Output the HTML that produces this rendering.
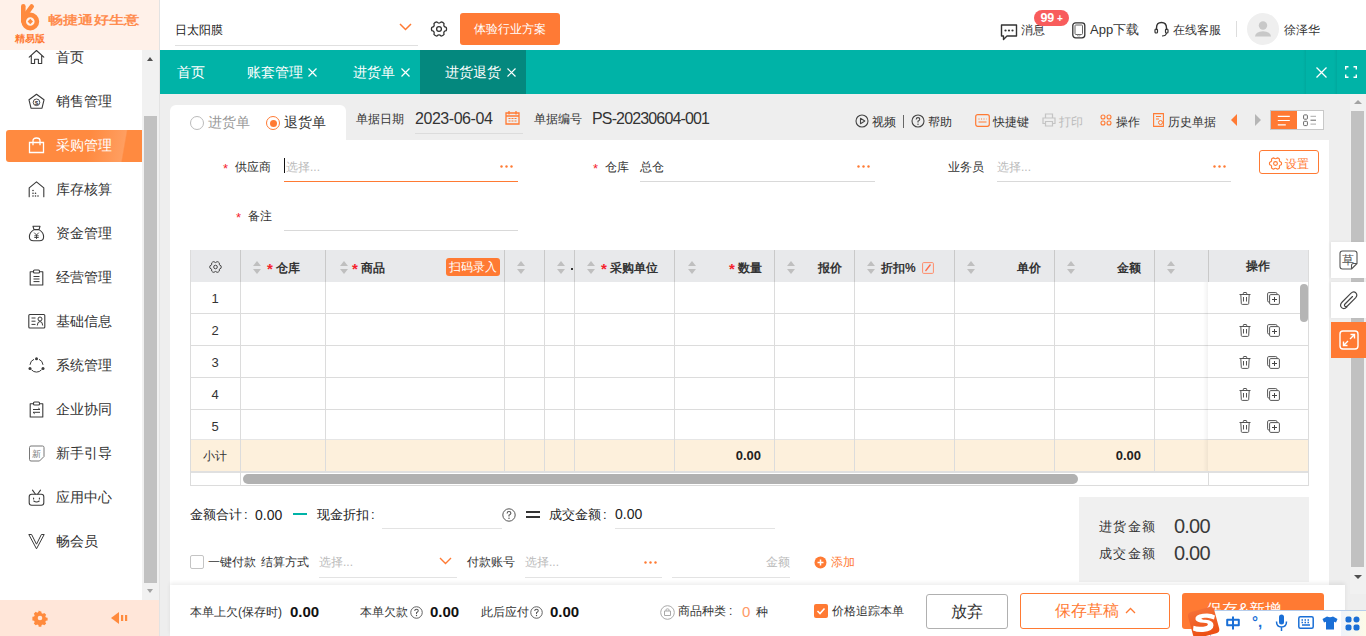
<!DOCTYPE html>
<html><head><meta charset="utf-8">
<style>
*{margin:0;padding:0;box-sizing:border-box}
html,body{width:1366px;height:636px;overflow:hidden;background:#eeeeee;font-family:"Liberation Sans",sans-serif;color:#333;font-size:13px}
.a{position:absolute;white-space:nowrap}
svg{position:absolute;overflow:visible}
/* sidebar */
#side{position:absolute;left:0;top:0;width:160px;height:636px;background:#fff;border-right:1px solid #e3e3e3}
#logo{position:absolute;left:0;top:0;width:159px;height:50px;background:#fff1e9}
.mi{position:absolute;left:56px;font-size:14px;color:#333;line-height:16px}
#sfoot{position:absolute;left:0;top:600px;width:159px;height:36px;background:#ffe6d9}
/* header */
#hdr{position:absolute;left:160px;top:0;width:1206px;height:50px;background:#fff}
#tabs{position:absolute;left:160px;top:50px;width:1206px;height:44px;background:#00b3a7}
.tab{position:absolute;top:0;height:44px;line-height:44px;color:#fff;font-size:14px}
#panel{position:absolute;left:170px;top:140px;width:1159px;height:460px;background:#fff}
.lbl{font-size:12px;color:#333;line-height:16px}
.red{color:#f5222d}
.uline{position:absolute;height:1px;background:#d9d9d9}
.th{position:absolute;top:250px;height:32px;background:#e8e9eb}
.vl{position:absolute;width:1px;background:#dcdcdc}
.hl{position:absolute;height:1px;background:#dcdcdc}
.sort{position:absolute;width:8px;height:13px}
.sort:before{content:"";position:absolute;left:0;top:0;border-left:4px solid transparent;border-right:4px solid transparent;border-bottom:5px solid #bfbfbf}
.sort:after{content:"";position:absolute;left:0;top:8px;border-left:4px solid transparent;border-right:4px solid transparent;border-top:5px solid #bfbfbf}
.thl{position:absolute;top:260px;font-size:12px;font-weight:bold;color:#333;line-height:16px}
</style></head><body>

<!-- SIDEBAR -->
<div id="side">
  <div id="logo">
    <svg style="left:0;top:0" width="159" height="50">
      <circle cx="30.3" cy="21.5" r="6.6" fill="none" stroke="#ff8a3d" stroke-width="4.6"/>
      <path d="M23.3 6.3 V21.5" stroke="#ff8a3d" stroke-width="4.6" stroke-linecap="round"/>
      <path d="M31.7 6.5 L26.5 13.5" stroke="#ff8a3d" stroke-width="4.6" stroke-linecap="round"/>
      <path d="M30.3 18.8 L33 21.5 L30.3 24.2 L27.6 21.5Z" fill="#ff8a3d"/>
    </svg>
    <div class="a" style="left:48px;top:12px;font-size:12px;font-weight:bold;color:#ff8d4f;line-height:16px;transform:scaleX(1.27);transform-origin:0 0">畅捷通好生意</div>
    <div class="a" style="left:15px;top:32px;font-size:10px;font-weight:bold;color:#ff7a33;line-height:14px;letter-spacing:0.2px">精易版</div>
  </div>
  <!-- scroll track -->
  <div class="a" style="left:142px;top:50px;width:17px;height:550px;background:#f1f1f1"></div>
  <div class="a" style="left:144px;top:116px;width:13px;height:467px;background:#c1c1c1"></div>
  <div class="a" style="left:147px;top:57px;width:0;height:0;border-left:3.5px solid transparent;border-right:3.5px solid transparent;border-bottom:4px solid #505050"></div>
  <div class="a" style="left:147px;top:589px;width:0;height:0;border-left:3.5px solid transparent;border-right:3.5px solid transparent;border-top:4px solid #a3a3a3"></div>
  <!-- active -->
  <div class="a" style="left:6px;top:130px;width:136px;height:32px;background:linear-gradient(100deg,#ff8a40 0%,#ff8a40 60%,#ff9e60 85%,#ff8a40 86%);border-radius:3px 0 0 3px"></div>
  <div class="mi" style="top:49px;color:#333">首页</div>
  <svg style="left:28px;top:49px" width="17" height="17" viewBox="0 0 17 17"><path d="M1.2 8.2 L8.5 1.5 L15.8 8.2 M3.3 6.5 V14.5 H6.6 V10.3 H10.4 V14.5 H13.7 V6.5" fill="none" stroke="#3a3a3a" stroke-width="1.1" stroke-linejoin="round" stroke-linecap="round" stroke-width="1.3"/></svg>
  <div class="mi" style="top:93px;color:#333">销售管理</div>
  <svg style="left:28px;top:93px" width="17" height="17" viewBox="0 0 17 17"><path d="M8.5 1.2 L16 6.8 L14 15.2 H3 L1 6.8Z" fill="none" stroke="#3a3a3a" stroke-width="1.1" stroke-linejoin="round" stroke-linecap="round" stroke-width="1.2"/><circle cx="8.5" cy="9.3" r="3.3" fill="none" stroke="#3a3a3a" stroke-width="0.9"/><text x="8.5" y="11.6" font-size="6.2" text-anchor="middle" fill="#3a3a3a" font-family="Liberation Sans" font-weight="bold">$</text></svg>
  <div class="mi" style="top:137px;color:#fff">采购管理</div>
  <svg style="left:28px;top:137px" width="17" height="17" viewBox="0 0 17 17"><path d="M1.5 5.5 H15.5 V15.5 H1.5Z M5 8.3 V3.8 Q5 1 8.5 1 Q12 1 12 3.8 V8.3" fill="none" stroke="#fff" stroke-width="1.3"/></svg>
  <div class="mi" style="top:181px;color:#333">库存核算</div>
  <svg style="left:28px;top:181px" width="17" height="17" viewBox="0 0 17 17"><path d="M1.2 15.8 V6.8 L8.5 0.8 L15.8 6.8 V15.8" fill="none" stroke="#3a3a3a" stroke-width="1.1" stroke-linejoin="round" stroke-linecap="round"/><path d="M5 9.5h.01M5 12.3h.01M7.5 12.3h.01M5 15h.01M7.5 15h.01M10 15h.01" stroke="#3a3a3a" stroke-width="1.6" stroke-linecap="round"/></svg>
  <div class="mi" style="top:225px;color:#333">资金管理</div>
  <svg style="left:28px;top:225px" width="17" height="17" viewBox="0 0 17 17"><path d="M6 4.6 L5 1.3 H12 L11 4.6 M6 4.6 H11 Q15.8 7.5 15.6 12 Q15.5 15.8 11.5 15.8 H5.5 Q1.5 15.8 1.4 12 Q1.2 7.5 6 4.6Z" fill="none" stroke="#3a3a3a" stroke-width="1.1" stroke-linejoin="round" stroke-linecap="round"/><path d="M6.2 7.6 L8.5 10 L10.8 7.6 M8.5 10 V14 M6.3 10.8 H10.7 M6.3 12.5 H10.7" fill="none" stroke="#3a3a3a" stroke-width="0.9"/></svg>
  <div class="mi" style="top:269px;color:#333">经营管理</div>
  <svg style="left:28px;top:269px" width="17" height="17" viewBox="0 0 17 17"><path d="M5.5 2.8 H2.2 V16 H14.8 V2.8 H11.5" fill="none" stroke="#3a3a3a" stroke-width="1.1" stroke-linejoin="round" stroke-linecap="round"/><rect x="5.5" y="1" width="6" height="3" rx="1" fill="none" stroke="#3a3a3a" stroke-width="1.1" stroke-linejoin="round" stroke-linecap="round"/><path d="M5.5 7.5 H11.5 M5.5 10 H11.5 M5.5 12.6 H11.5" stroke="#3a3a3a" stroke-width="1"/></svg>
  <div class="mi" style="top:313px;color:#333">基础信息</div>
  <svg style="left:28px;top:313px" width="17" height="17" viewBox="0 0 17 17"><rect x="0.8" y="1.5" width="16" height="13.5" rx="1" fill="none" stroke="#3a3a3a" stroke-width="1.1" stroke-linejoin="round" stroke-linecap="round"/><path d="M3.5 5 H7.5 M3.5 8.2 H7.5 M3.5 11.4 H7.5" stroke="#3a3a3a" stroke-width="1"/><circle cx="12" cy="6" r="2" fill="none" stroke="#3a3a3a" stroke-width="1"/><path d="M9.3 12.5 Q9.5 8.5 12 8.5 Q14.5 8.5 14.7 12.5" fill="none" stroke="#3a3a3a" stroke-width="1"/></svg>
  <div class="mi" style="top:357px;color:#333">系统管理</div>
  <svg style="left:28px;top:357px" width="17" height="17" viewBox="0 0 17 17"><path d="M6 2.3 A6.6 6.6 0 0 0 2 7.8 M11 2.3 A6.6 6.6 0 0 1 15 7.8 M13.5 12.8 A6.6 6.6 0 0 1 3.5 12.8" fill="none" stroke="#3a3a3a" stroke-width="1"/><circle cx="8.5" cy="1.8" r="1.5" fill="#3a3a3a"/><circle cx="2" cy="11.5" r="1.5" fill="#3a3a3a"/><circle cx="15" cy="11.5" r="1.5" fill="#3a3a3a"/></svg>
  <div class="mi" style="top:401px;color:#333">企业协同</div>
  <svg style="left:28px;top:401px" width="17" height="17" viewBox="0 0 17 17"><path d="M5.5 2.8 H2.2 V16 H14.8 V2.8 H11.5" fill="none" stroke="#3a3a3a" stroke-width="1.1" stroke-linejoin="round" stroke-linecap="round"/><rect x="5.5" y="1" width="6" height="3" rx="1" fill="none" stroke="#3a3a3a" stroke-width="1.1" stroke-linejoin="round" stroke-linecap="round"/><path d="M5 8.5 H12 L10.3 7 M12 11.3 H5 L6.7 12.8" fill="none" stroke="#3a3a3a" stroke-width="1"/></svg>
  <div class="mi" style="top:445px;color:#333">新手引导</div>
  <svg style="left:28px;top:445px" width="17" height="17" viewBox="0 0 17 17"><path d="M3 1 H14.5 Q16 1 16 2.5 V11.5 L11.5 16 H3 Q1.5 16 1.5 14.5 V2.5 Q1.5 1 3 1Z" fill="none" stroke="#777" stroke-width="1"/><text x="8.7" y="12.2" font-size="9" text-anchor="middle" fill="#777">新</text></svg>
  <div class="mi" style="top:489px;color:#333">应用中心</div>
  <svg style="left:28px;top:489px" width="17" height="17" viewBox="0 0 17 17"><rect x="1.2" y="5.3" width="14.6" height="11" rx="2.5" fill="none" stroke="#3a3a3a" stroke-width="1.1" stroke-linejoin="round" stroke-linecap="round"/><path d="M4.5 1.2 L7.3 5 M12.5 1.2 L9.7 5" fill="none" stroke="#3a3a3a" stroke-width="1.1" stroke-linejoin="round" stroke-linecap="round"/><path d="M5.6 9 V10 M11.4 9 V10 M5.8 12 Q8.5 14 11.2 12" fill="none" stroke="#3a3a3a" stroke-width="1.1" stroke-linejoin="round" stroke-linecap="round"/></svg>
  <div class="mi" style="top:533px;color:#333">畅会员</div>
  <svg style="left:28px;top:533px" width="17" height="17" viewBox="0 0 17 17"><path d="M0.8 1.5 L8.5 15.8 L16.2 1.5 H13.4 L8.5 11.2 L3.6 1.5Z" fill="none" stroke="#3a3a3a" stroke-width="1" stroke-linejoin="round"/></svg>
  
  <div id="sfoot">
    <svg style="left:32px;top:10px" width="16" height="16" viewBox="0 0 16 16"><path d="M8 1.2l1.3.3.3 1.7 1.2.6 1.5-.9 1.9 1.9-.9 1.5.6 1.2 1.7.3v2.6l-1.7.3-.6 1.2.9 1.5-1.9 1.9-1.5-.9-1.2.6-.3 1.7H6.7l-.3-1.7-1.2-.6-1.5.9-1.9-1.9.9-1.5-.6-1.2-1.7-.3V6.7l1.7-.3.6-1.2-.9-1.5 1.9-1.9 1.5.9 1.2-.6.3-1.7z" fill="#ff8a3d"/><circle cx="8" cy="8" r="2.3" fill="#ffe6d9"/></svg>
    <svg style="left:110px;top:11px" width="20" height="14" viewBox="0 0 20 14"><path d="M1 7 L9 1 V13Z" fill="#ff8a3d"/><rect x="11" y="4" width="2.2" height="6" fill="#ff8a3d"/><rect x="15" y="4" width="2.2" height="6" fill="#ff8a3d"/></svg>
  </div>
</div>

<!-- HEADER -->
<div id="hdr">
  <div class="a" style="left:15px;top:22px;font-size:12px;color:#222;line-height:16px">日太阳膜</div>
  <div class="a" style="left:15px;top:45px;width:243px;height:1px;background:#e0e0e0"></div>
  <svg style="left:239px;top:23px" width="13" height="8" viewBox="0 0 13 8"><path d="M1 1 L6.5 6.5 L12 1" fill="none" stroke="#ff7a33" stroke-width="1.5"/></svg>
  <svg style="left:270px;top:20px" width="18" height="18" viewBox="0 0 18 18"><path d="M16.21 7.34 A4.07 4.07 0 0 1 16.21 10.66 Q12.98 11.30 14.05 14.41 A4.07 4.07 0 0 1 11.16 16.08 Q9.00 13.60 6.84 16.08 A4.07 4.07 0 0 1 3.95 14.41 Q5.02 11.30 1.79 10.66 A4.07 4.07 0 0 1 1.79 7.34 Q5.02 6.70 3.95 3.59 A4.07 4.07 0 0 1 6.84 1.92 Q9.00 4.40 11.16 1.92 A4.07 4.07 0 0 1 14.05 3.59 Q12.98 6.70 16.21 7.34Z" fill="none" stroke="#333" stroke-width="1.3" stroke-linejoin="round"/><circle cx="9" cy="9" r="2.4" fill="none" stroke="#333" stroke-width="1.3"/></svg>
  <div class="a" style="left:300px;top:13px;width:100px;height:32px;background:#ff7a35;border-radius:3px;color:#fff;font-size:12px;line-height:32px;text-align:center">体验行业方案</div>
  <!-- right -->
  <svg style="left:840px;top:23px" width="18" height="18" viewBox="0 0 18 18"><path d="M1.5 2 H16.5 V13 H7 L3.5 16.5 V13 H1.5Z" fill="none" stroke="#333" stroke-width="1.4" stroke-linejoin="round"/><circle cx="5.5" cy="7.5" r="1.1" fill="#333"/><circle cx="9" cy="7.5" r="1.1" fill="#333"/><circle cx="12.5" cy="7.5" r="1.1" fill="#333"/></svg>
  <div class="a" style="left:861px;top:22px;font-size:12px;color:#333;line-height:16px">消息</div>
  <div class="a" style="left:874px;top:10px;width:35px;height:16px;background:#f85c5c;border-radius:8px;color:#fff;font-size:12.5px;font-weight:bold;line-height:16px;text-align:center;letter-spacing:-0.3px">99<span style="font-size:10px;margin-left:3px">+</span></div>
  <svg style="left:912px;top:22px" width="14" height="17" viewBox="0 0 14 17"><rect x="0.8" y="0.8" width="12" height="15" rx="2.8" fill="none" stroke="#333" stroke-width="1.3"/><path d="M3.8 3 H9.8 Q10.5 3 10.5 3.7 V11.5 Q10.5 12.5 9.5 12.5 H4 Q3 12.5 3 11.5 V3.7 Q3 3 3.8 3Z" fill="none" stroke="#666" stroke-width="1"/><path d="M5.5 12.5 V14 H8 V12.5" fill="none" stroke="#999" stroke-width="0.8"/></svg>
  <div class="a" style="left:930px;top:22px;font-size:13px;color:#333;line-height:16px">App下载</div>
  <svg style="left:994px;top:21px" width="15" height="17" viewBox="0 0 15 17"><path d="M2.5 9 V7 Q2.5 1.5 7.5 1.5 Q12.5 1.5 12.5 7 V9" fill="none" stroke="#333" stroke-width="1.4"/><rect x="1" y="8" width="2.5" height="4" rx="1" fill="none" stroke="#333" stroke-width="1.2"/><rect x="11.5" y="8" width="2.5" height="4" rx="1" fill="none" stroke="#333" stroke-width="1.2"/><path d="M12.5 12 Q12 15 8 15" fill="none" stroke="#333" stroke-width="1.2"/></svg>
  <div class="a" style="left:1013px;top:22px;font-size:12px;color:#333;line-height:16px">在线客服</div>
  <div class="a" style="left:1076px;top:21px;width:1px;height:16px;background:#ddd"></div>
  <div class="a" style="left:1087px;top:13px;width:32px;height:32px;border-radius:50%;background:#efefef;overflow:hidden">
    <svg style="left:0;top:0" width="32" height="32" viewBox="0 0 32 32"><circle cx="16" cy="12.5" r="4.2" fill="#c8c8c8"/><path d="M8 23.5 Q8.5 18.5 16 18.3 Q23.5 18.5 24 23.5Z" fill="#c8c8c8"/></svg>
  </div>
  <div class="a" style="left:1124px;top:22px;font-size:12px;color:#333;line-height:16px">徐泽华</div>
</div>
<div id="tabs">
  <div class="tab" style="left:17px">首页</div>
  <div class="tab" style="left:87px">账套管理</div>
  <svg style="left:148px;top:18px" width="9" height="9" viewBox="0 0 9 9"><path d="M0.5 0.5 L8.5 8.5 M8.5 0.5 L0.5 8.5" stroke="#fff" stroke-width="1.2"/></svg>
  <div class="tab" style="left:193px">进货单</div>
  <svg style="left:241px;top:18px" width="9" height="9" viewBox="0 0 9 9"><path d="M0.5 0.5 L8.5 8.5 M8.5 0.5 L0.5 8.5" stroke="#fff" stroke-width="1.2"/></svg>
  <div class="a" style="left:260px;top:0;width:106px;height:44px;background:#04887e"></div>
  <div class="tab" style="left:285px">进货退货</div>
  <svg style="left:347px;top:18px" width="9" height="9" viewBox="0 0 9 9"><path d="M0.5 0.5 L8.5 8.5 M8.5 0.5 L0.5 8.5" stroke="#fff" stroke-width="1.2"/></svg>
  <div class="a" style="left:1143px;top:0;width:3px;height:44px;background:linear-gradient(90deg,rgba(0,0,0,0),rgba(0,0,0,0.06))"></div>
  <div class="a" style="left:1174px;top:0;width:3px;height:44px;background:linear-gradient(90deg,rgba(0,0,0,0),rgba(0,0,0,0.06))"></div>
  <svg style="left:1156px;top:17px" width="11" height="11" viewBox="0 0 11 11"><path d="M0.5 0.5 L10.5 10.5 M10.5 0.5 L0.5 10.5" stroke="#fff" stroke-width="1.3"/></svg>
  <svg style="left:1185px;top:16px" width="12" height="12" viewBox="0 0 12 12"><path d="M0.7 3.5 V0.7 H3.5 M8.5 0.7 H11.3 V3.5 M11.3 8.5 V11.3 H8.5 M3.5 11.3 H0.7 V8.5" fill="none" stroke="#fff" stroke-width="1.4"/></svg>
</div>

<!-- PANEL -->
<div id="panel"></div>
<!-- top toolbar -->
<div class="a" style="left:170px;top:105px;width:176px;height:40px;background:#fff;border-radius:6px 6px 0 0"></div>
<div class="a" style="left:190px;top:116px;width:14px;height:14px;border:1px solid #bbb;border-radius:50%;background:#fff"></div>
<div class="a" style="left:208px;top:113px;font-size:14px;color:#999;line-height:18px">进货单</div>
<div class="a" style="left:266px;top:116px;width:14px;height:14px;border:1px solid #ff7a33;border-radius:50%;background:#fff"></div>
<div class="a" style="left:269.5px;top:119.5px;width:7px;height:7px;border-radius:50%;background:#ff7a33"></div>
<div class="a" style="left:284px;top:113px;font-size:14px;color:#333;line-height:18px">退货单</div>
<div class="a" style="left:356px;top:111px;font-size:12px;color:#333;line-height:16px">单据日期</div>
<div class="a" style="left:415px;top:110px;font-size:16px;color:#333;line-height:18px;letter-spacing:-0.45px">2023-06-04</div>
<div class="a" style="left:415px;top:133px;width:108px;height:1px;background:#dcdcdc"></div>
<svg style="left:505px;top:110px" width="15" height="15" viewBox="0 0 15 15"><path d="M1 3 H14 V14 H1Z M1 6 H14 M4 1 V4.5 M11 1 V4.5" fill="none" stroke="#ff7a33" stroke-width="1.3"/><path d="M3.5 8.5h2M6.5 8.5h2M9.5 8.5h2M3.5 11h2M6.5 11h2M9.5 11h2" stroke="#ff7a33" stroke-width="1.2"/></svg>
<div class="a" style="left:534px;top:111px;font-size:12px;color:#333;line-height:16px">单据编号</div>
<div class="a" style="left:592px;top:110px;font-size:16px;color:#333;line-height:18px;letter-spacing:-0.85px">PS-20230604-001</div>
<!-- right toolbar -->
<svg style="left:855px;top:114px" width="14" height="14" viewBox="0 0 14 14"><circle cx="7" cy="7" r="6" fill="none" stroke="#444" stroke-width="1.1"/><path d="M5.5 4.3 L9.8 7 L5.5 9.7Z" fill="none" stroke="#444" stroke-width="1.1" stroke-linejoin="round"/></svg>
<div class="a" style="left:872px;top:114px;font-size:12px;color:#333;line-height:16px">视频</div>
<div class="a" style="left:903px;top:115px;width:1px;height:13px;background:#666"></div>
<svg style="left:911px;top:114px" width="14" height="14" viewBox="0 0 14 14"><circle cx="7" cy="7" r="6" fill="none" stroke="#444" stroke-width="1.1"/><path d="M5.2 5.4 Q5.2 3.6 7 3.6 Q8.8 3.6 8.8 5.2 Q8.8 6.3 7 7.2 V8.6" fill="none" stroke="#444" stroke-width="1.1"/><circle cx="7" cy="10.3" r="0.7" fill="#444"/></svg>
<div class="a" style="left:928px;top:114px;font-size:12px;color:#333;line-height:16px">帮助</div>
<svg style="left:975px;top:114px" width="15" height="13" viewBox="0 0 15 13"><rect x="0.7" y="0.7" width="13.6" height="11.6" rx="2" fill="none" stroke="#ff7a33" stroke-width="1.2"/><path d="M3.5 5h1M6 5h1M8.5 5h1M11 5h.5M3.5 8h8" stroke="#ff7a33" stroke-width="1.1"/></svg>
<div class="a" style="left:993px;top:114px;font-size:12px;color:#333;line-height:16px">快捷键</div>
<svg style="left:1042px;top:113px" width="14" height="14" viewBox="0 0 14 14"><path d="M3.5 5 V1 H10.5 V5 M3.5 10.5 H1 V5 H13 V10.5 H10.5 M3.5 8.5 H10.5 V13 H3.5Z" fill="none" stroke="#c4c4c4" stroke-width="1.2"/></svg>
<div class="a" style="left:1059px;top:114px;font-size:12px;color:#bbb;line-height:16px">打印</div>
<svg style="left:1100px;top:114px" width="12" height="12" viewBox="0 0 12 12"><circle cx="3" cy="3" r="2" fill="none" stroke="#ff7a33" stroke-width="1.1"/><circle cx="9" cy="3" r="2" fill="none" stroke="#ff7a33" stroke-width="1.1"/><circle cx="3" cy="9" r="2" fill="none" stroke="#ff7a33" stroke-width="1.1"/><circle cx="9" cy="9" r="2" fill="none" stroke="#ff7a33" stroke-width="1.1"/></svg>
<div class="a" style="left:1116px;top:114px;font-size:12px;color:#333;line-height:16px">操作</div>
<svg style="left:1153px;top:113px" width="11" height="14" viewBox="0 0 11 14"><path d="M0.6 0.6 H10.4 V13.4 H0.6Z M3 3.5 H8 M3 6 H6" fill="none" stroke="#ff7a33" stroke-width="1.1"/><circle cx="7.5" cy="9.5" r="2" fill="none" stroke="#ff7a33" stroke-width="1"/></svg>
<div class="a" style="left:1168px;top:114px;font-size:12px;color:#333;line-height:16px">历史单据</div>
<div class="a" style="left:1231px;top:114px;width:0;height:0;border-top:6px solid transparent;border-bottom:6px solid transparent;border-right:6px solid #ff7a33"></div>
<div class="a" style="left:1255px;top:114px;width:0;height:0;border-top:6px solid transparent;border-bottom:6px solid transparent;border-left:6px solid #b5b5b5"></div>
<div class="a" style="left:1270px;top:110px;width:54px;height:20px;border:1px solid #c8c8c8;background:#fff"></div>
<div class="a" style="left:1271px;top:111px;width:26px;height:18px;background:#ff7a33"></div>
<svg style="left:1277px;top:114px" width="16" height="12" viewBox="0 0 16 12"><path d="M0.8 2.3 H12.8 M0.8 6.5 H12.8 M0.8 10.8 H8.8" stroke="#fff" stroke-width="1.2"/></svg>
<svg style="left:1302px;top:114px" width="16" height="12" viewBox="0 0 16 12"><rect x="1.6" y="0.9" width="3.8" height="4.3" rx="0.8" fill="none" stroke="#666" stroke-width="1"/><rect x="1.6" y="7.3" width="3.8" height="4.3" rx="0.8" fill="none" stroke="#666" stroke-width="1"/><path d="M8.5 2.3 H14 M8.5 10.1 H14" stroke="#bbb" stroke-width="1.2"/><path d="M8.5 6.2 H14" stroke="#666" stroke-width="1"/></svg>
<!-- page scrollbar -->
<div class="a" style="left:1350px;top:94px;width:16px;height:500px;background:#f1f1f1"></div>
<div class="a" style="left:1351px;top:111px;width:13px;height:456px;background:#c1c1c1"></div>
<div class="a" style="left:1354px;top:100px;width:0;height:0;border-left:4px solid transparent;border-right:4px solid transparent;border-bottom:4px solid #a3a3a3"></div>
<div class="a" style="left:1354px;top:575px;width:0;height:0;border-left:4px solid transparent;border-right:4px solid transparent;border-top:4px solid #505050"></div>

<!-- form -->
<div class="a red" style="left:223px;top:161px;font-size:13px;line-height:16px">*</div>
<div class="a lbl" style="left:235px;top:159px">供应商</div>
<div class="a" style="left:284px;top:158px;width:1px;height:15px;background:#111"></div>
<div class="a" style="left:286px;top:159px;font-size:12px;color:#bbb;line-height:16px">选择...</div>
<div class="a" style="left:284px;top:181px;width:234px;height:1px;background:#ff7a33"></div>
<svg style="left:500px;top:165px" width="13" height="3" viewBox="0 0 13 3"><circle cx="1.5" cy="1.5" r="1.2" fill="#ff7a33"/><circle cx="6.5" cy="1.5" r="1.2" fill="#ff7a33"/><circle cx="11.5" cy="1.5" r="1.2" fill="#ff7a33"/></svg>
<div class="a red" style="left:593px;top:161px;font-size:13px;line-height:16px">*</div>
<div class="a lbl" style="left:605px;top:159px">仓库</div>
<div class="a lbl" style="left:640px;top:159px">总仓</div>
<div class="uline" style="left:640px;top:181px;width:235px"></div>
<svg style="left:857px;top:165px" width="13" height="3" viewBox="0 0 13 3"><circle cx="1.5" cy="1.5" r="1.2" fill="#ff7a33"/><circle cx="6.5" cy="1.5" r="1.2" fill="#ff7a33"/><circle cx="11.5" cy="1.5" r="1.2" fill="#ff7a33"/></svg>
<div class="a lbl" style="left:948px;top:159px">业务员</div>
<div class="a" style="left:997px;top:159px;font-size:12px;color:#bbb;line-height:16px">选择...</div>
<div class="uline" style="left:997px;top:181px;width:234px"></div>
<svg style="left:1213px;top:165px" width="13" height="3" viewBox="0 0 13 3"><circle cx="1.5" cy="1.5" r="1.2" fill="#ff7a33"/><circle cx="6.5" cy="1.5" r="1.2" fill="#ff7a33"/><circle cx="11.5" cy="1.5" r="1.2" fill="#ff7a33"/></svg>
<div class="a" style="left:1259px;top:150px;width:60px;height:24px;border:1px solid #ff7a33;border-radius:3px"></div>
<svg style="left:1269px;top:157px" width="13" height="13" viewBox="0 0 13 13"><path d="M12.25 5.17 A3.25 3.25 0 0 1 12.25 7.83 Q9.79 8.40 10.52 10.81 A3.25 3.25 0 0 1 8.22 12.14 Q6.50 10.30 4.78 12.14 A3.25 3.25 0 0 1 2.48 10.81 Q3.21 8.40 0.75 7.83 A3.25 3.25 0 0 1 0.75 5.17 Q3.21 4.60 2.48 2.19 A3.25 3.25 0 0 1 4.78 0.86 Q6.50 2.70 8.22 0.86 A3.25 3.25 0 0 1 10.52 2.19 Q9.79 4.60 12.25 5.17Z" fill="none" stroke="#ff7a33" stroke-width="1.1" stroke-linejoin="round"/><circle cx="6.5" cy="6.5" r="1.9" fill="none" stroke="#ff7a33" stroke-width="1.1"/></svg>
<div class="a" style="left:1285px;top:156px;font-size:12px;color:#ff7a33;line-height:16px">设置</div>
<div class="a red" style="left:236px;top:210px;font-size:13px;line-height:16px">*</div>
<div class="a lbl" style="left:248px;top:208px">备注</div>
<div class="uline" style="left:284px;top:230px;width:234px"></div>
<div class="a" style="left:190px;top:250px;width:1119px;height:32px;background:#e8e9eb"></div>
<div class="a" style="left:190px;top:439px;width:1119px;height:32px;background:#fdf0dc"></div>
<div class="hl" style="left:190px;top:313px;width:1119px"></div>
<div class="hl" style="left:190px;top:345px;width:1119px"></div>
<div class="hl" style="left:190px;top:377px;width:1119px"></div>
<div class="hl" style="left:190px;top:409px;width:1119px"></div>
<div class="hl" style="left:190px;top:439px;width:1119px;background:#e6e6e6"></div>
<div class="hl" style="left:190px;top:471px;width:1119px;height:2px;background:#e0e0e0"></div>
<div class="hl" style="left:190px;top:485px;width:1119px"></div>
<div class="vl" style="left:190px;top:250px;height:236px;background:#dcdcdc"></div>
<div class="vl" style="left:240px;top:250px;height:32px;background:#c9c9c9"></div>
<div class="vl" style="left:240px;top:282px;height:204px"></div>
<div class="vl" style="left:325px;top:250px;height:32px;background:#c9c9c9"></div>
<div class="vl" style="left:325px;top:282px;height:189px"></div>
<div class="vl" style="left:504px;top:250px;height:32px;background:#c9c9c9"></div>
<div class="vl" style="left:504px;top:282px;height:189px"></div>
<div class="vl" style="left:544px;top:250px;height:32px;background:#c9c9c9"></div>
<div class="vl" style="left:544px;top:282px;height:189px"></div>
<div class="vl" style="left:574px;top:250px;height:32px;background:#c9c9c9"></div>
<div class="vl" style="left:574px;top:282px;height:189px"></div>
<div class="vl" style="left:674px;top:250px;height:32px;background:#c9c9c9"></div>
<div class="vl" style="left:674px;top:282px;height:189px"></div>
<div class="vl" style="left:774px;top:250px;height:32px;background:#c9c9c9"></div>
<div class="vl" style="left:774px;top:282px;height:189px"></div>
<div class="vl" style="left:854px;top:250px;height:32px;background:#c9c9c9"></div>
<div class="vl" style="left:854px;top:282px;height:189px"></div>
<div class="vl" style="left:954px;top:250px;height:32px;background:#c9c9c9"></div>
<div class="vl" style="left:954px;top:282px;height:189px"></div>
<div class="vl" style="left:1054px;top:250px;height:32px;background:#c9c9c9"></div>
<div class="vl" style="left:1054px;top:282px;height:189px"></div>
<div class="vl" style="left:1154px;top:250px;height:32px;background:#c9c9c9"></div>
<div class="vl" style="left:1154px;top:282px;height:189px"></div>
<div class="vl" style="left:1208px;top:250px;height:32px;background:#c9c9c9"></div>
<div class="vl" style="left:1308px;top:250px;height:236px;background:#dcdcdc"></div>
<svg style="left:208px;top:260px" width="14" height="14" viewBox="0 0 14 14"><path d="M12.96 5.74 A3.08 3.08 0 0 1 12.96 8.26 Q10.53 8.75 11.32 11.10 A3.08 3.08 0 0 1 9.14 12.36 Q7.50 10.50 5.86 12.36 A3.08 3.08 0 0 1 3.68 11.10 Q4.47 8.75 2.04 8.26 A3.08 3.08 0 0 1 2.04 5.74 Q4.47 5.25 3.68 2.90 A3.08 3.08 0 0 1 5.86 1.64 Q7.50 3.50 9.14 1.64 A3.08 3.08 0 0 1 11.32 2.90 Q10.53 5.25 12.96 5.74Z" fill="none" stroke="#444" stroke-width="1" stroke-linejoin="round"/><circle cx="7.5" cy="7" r="1.8" fill="none" stroke="#444" stroke-width="1"/></svg>
<div class="sort" style="left:253px;top:261px"></div>
<div class="sort" style="left:340px;top:261px"></div>
<div class="sort" style="left:517px;top:261px"></div>
<div class="sort" style="left:557px;top:261px"></div>
<div class="sort" style="left:587px;top:261px"></div>
<div class="sort" style="left:688px;top:261px"></div>
<div class="sort" style="left:787px;top:261px"></div>
<div class="sort" style="left:867px;top:261px"></div>
<div class="sort" style="left:967px;top:261px"></div>
<div class="sort" style="left:1067px;top:261px"></div>
<div class="sort" style="left:1167px;top:261px"></div>
<div class="a red" style="left:267px;top:261px;font-size:15px;font-weight:bold;line-height:16px">*</div><div class="a thl" style="left:276px">仓库</div>
<div class="a red" style="left:352px;top:261px;font-size:15px;font-weight:bold;line-height:16px">*</div><div class="a thl" style="left:361px">商品</div>
<div class="a" style="left:446px;top:258px;width:54px;height:18px;background:#ff7a33;border-radius:3px;color:#fff;font-size:12px;line-height:18px;text-align:center">扫码录入</div>
<div class="a" style="left:571px;top:268px;width:2px;height:2px;background:#333"></div>
<div class="a red" style="left:601px;top:261px;font-size:15px;font-weight:bold;line-height:16px">*</div><div class="a thl" style="left:610px">采购单位</div>
<div class="a red" style="left:729px;top:261px;font-size:15px;font-weight:bold;line-height:16px">*</div><div class="a thl" style="left:738px">数量</div>
<div class="a thl" style="left:818px">报价</div>
<div class="a thl" style="left:881px">折扣%</div>
<svg style="left:922px;top:262px" width="12" height="12" viewBox="0 0 12 12"><rect x="0.6" y="0.6" width="10.8" height="10.8" rx="1" fill="none" stroke="#ff8c6a" stroke-width="1"/><path d="M3.5 9 L8.5 2.5" stroke="#ff6a4a" stroke-width="1.3"/></svg>
<div class="a thl" style="left:1017px">单价</div>
<div class="a thl" style="left:1117px">金额</div>
<div class="a" style="left:190px;top:291px;width:50px;text-align:center;font-size:13px;line-height:16px;color:#333">1</div>
<div class="a" style="left:190px;top:323px;width:50px;text-align:center;font-size:13px;line-height:16px;color:#333">2</div>
<div class="a" style="left:190px;top:355px;width:50px;text-align:center;font-size:13px;line-height:16px;color:#333">3</div>
<div class="a" style="left:190px;top:387px;width:50px;text-align:center;font-size:13px;line-height:16px;color:#333">4</div>
<div class="a" style="left:190px;top:419px;width:50px;text-align:center;font-size:13px;line-height:16px;color:#333">5</div>
<div class="a" style="left:190px;top:448px;width:50px;text-align:center;font-size:12px;line-height:16px;color:#333">小计</div>
<div class="a" style="left:674px;top:448px;width:87px;text-align:right;font-size:13px;font-weight:bold;line-height:16px;color:#222">0.00</div>
<div class="a" style="left:1054px;top:448px;width:87px;text-align:right;font-size:13px;font-weight:bold;line-height:16px;color:#222">0.00</div>
<div class="a" style="left:243px;top:474px;width:835px;height:10px;border-radius:5px;background:#b1b1b1"></div>
<div class="a" style="left:1203px;top:282px;width:5px;height:189px;background:linear-gradient(90deg,rgba(0,0,0,0),rgba(0,0,0,0.05))"></div>
<div class="a" style="left:1208px;top:282px;width:100px;height:157px;background:#fff"></div>
<div class="a" style="left:1208px;top:439px;width:100px;height:32px;background:#fdf0dc"></div>
<div class="hl" style="left:1208px;top:313px;width:100px"></div>
<div class="hl" style="left:1208px;top:345px;width:100px"></div>
<div class="hl" style="left:1208px;top:377px;width:100px"></div>
<div class="hl" style="left:1208px;top:409px;width:100px"></div>
<div class="hl" style="left:1208px;top:439px;width:100px"></div>
<div class="vl" style="left:1208px;top:471px;height:15px"></div>
<div class="vl" style="left:1208px;top:250px;height:32px;background:#c9c9c9"></div>
<div class="a thl" style="left:1208px;top:258px;width:100px;text-align:center">操作</div>
<svg style="left:1239px;top:292px" width="12" height="13" viewBox="0 0 12 13"><path d="M0.5 2.5 H11.5 M4.3 2.5 V1.2 Q4.3 0.5 5 0.5 H7 Q7.7 0.5 7.7 1.2 V2.5 M1.8 2.5 L2.3 11.5 Q2.4 12.4 3.3 12.4 H8.7 Q9.6 12.4 9.7 11.5 L10.2 2.5 M4.5 5 V9.5 M7.5 5 V9.5" fill="none" stroke="#555" stroke-width="1"/></svg>
<svg style="left:1267px;top:292px" width="13" height="13" viewBox="0 0 13 13"><path d="M2.5 10 H1.8 Q0.6 10 0.6 8.8 V1.8 Q0.6 0.6 1.8 0.6 H8.8 Q10 0.6 10 1.8 V2.5" fill="none" stroke="#555" stroke-width="1"/><rect x="2.6" y="2.6" width="9.8" height="9.8" rx="1.2" fill="#fff" stroke="#555" stroke-width="1"/><path d="M5 7.5 H10 M7.5 5 V10" stroke="#444" stroke-width="1"/></svg>
<svg style="left:1239px;top:324px" width="12" height="13" viewBox="0 0 12 13"><path d="M0.5 2.5 H11.5 M4.3 2.5 V1.2 Q4.3 0.5 5 0.5 H7 Q7.7 0.5 7.7 1.2 V2.5 M1.8 2.5 L2.3 11.5 Q2.4 12.4 3.3 12.4 H8.7 Q9.6 12.4 9.7 11.5 L10.2 2.5 M4.5 5 V9.5 M7.5 5 V9.5" fill="none" stroke="#555" stroke-width="1"/></svg>
<svg style="left:1267px;top:324px" width="13" height="13" viewBox="0 0 13 13"><path d="M2.5 10 H1.8 Q0.6 10 0.6 8.8 V1.8 Q0.6 0.6 1.8 0.6 H8.8 Q10 0.6 10 1.8 V2.5" fill="none" stroke="#555" stroke-width="1"/><rect x="2.6" y="2.6" width="9.8" height="9.8" rx="1.2" fill="#fff" stroke="#555" stroke-width="1"/><path d="M5 7.5 H10 M7.5 5 V10" stroke="#444" stroke-width="1"/></svg>
<svg style="left:1239px;top:356px" width="12" height="13" viewBox="0 0 12 13"><path d="M0.5 2.5 H11.5 M4.3 2.5 V1.2 Q4.3 0.5 5 0.5 H7 Q7.7 0.5 7.7 1.2 V2.5 M1.8 2.5 L2.3 11.5 Q2.4 12.4 3.3 12.4 H8.7 Q9.6 12.4 9.7 11.5 L10.2 2.5 M4.5 5 V9.5 M7.5 5 V9.5" fill="none" stroke="#555" stroke-width="1"/></svg>
<svg style="left:1267px;top:356px" width="13" height="13" viewBox="0 0 13 13"><path d="M2.5 10 H1.8 Q0.6 10 0.6 8.8 V1.8 Q0.6 0.6 1.8 0.6 H8.8 Q10 0.6 10 1.8 V2.5" fill="none" stroke="#555" stroke-width="1"/><rect x="2.6" y="2.6" width="9.8" height="9.8" rx="1.2" fill="#fff" stroke="#555" stroke-width="1"/><path d="M5 7.5 H10 M7.5 5 V10" stroke="#444" stroke-width="1"/></svg>
<svg style="left:1239px;top:388px" width="12" height="13" viewBox="0 0 12 13"><path d="M0.5 2.5 H11.5 M4.3 2.5 V1.2 Q4.3 0.5 5 0.5 H7 Q7.7 0.5 7.7 1.2 V2.5 M1.8 2.5 L2.3 11.5 Q2.4 12.4 3.3 12.4 H8.7 Q9.6 12.4 9.7 11.5 L10.2 2.5 M4.5 5 V9.5 M7.5 5 V9.5" fill="none" stroke="#555" stroke-width="1"/></svg>
<svg style="left:1267px;top:388px" width="13" height="13" viewBox="0 0 13 13"><path d="M2.5 10 H1.8 Q0.6 10 0.6 8.8 V1.8 Q0.6 0.6 1.8 0.6 H8.8 Q10 0.6 10 1.8 V2.5" fill="none" stroke="#555" stroke-width="1"/><rect x="2.6" y="2.6" width="9.8" height="9.8" rx="1.2" fill="#fff" stroke="#555" stroke-width="1"/><path d="M5 7.5 H10 M7.5 5 V10" stroke="#444" stroke-width="1"/></svg>
<svg style="left:1239px;top:420px" width="12" height="13" viewBox="0 0 12 13"><path d="M0.5 2.5 H11.5 M4.3 2.5 V1.2 Q4.3 0.5 5 0.5 H7 Q7.7 0.5 7.7 1.2 V2.5 M1.8 2.5 L2.3 11.5 Q2.4 12.4 3.3 12.4 H8.7 Q9.6 12.4 9.7 11.5 L10.2 2.5 M4.5 5 V9.5 M7.5 5 V9.5" fill="none" stroke="#555" stroke-width="1"/></svg>
<svg style="left:1267px;top:420px" width="13" height="13" viewBox="0 0 13 13"><path d="M2.5 10 H1.8 Q0.6 10 0.6 8.8 V1.8 Q0.6 0.6 1.8 0.6 H8.8 Q10 0.6 10 1.8 V2.5" fill="none" stroke="#555" stroke-width="1"/><rect x="2.6" y="2.6" width="9.8" height="9.8" rx="1.2" fill="#fff" stroke="#555" stroke-width="1"/><path d="M5 7.5 H10 M7.5 5 V10" stroke="#444" stroke-width="1"/></svg>
<div class="a" style="left:1300px;top:284px;width:8px;height:38px;border-radius:4px;background:#b5b5b5"></div>
<!-- bottom summary -->
<div class="a" style="left:190px;top:506px;font-size:13px;color:#222;line-height:18px">金额合计<span style="margin-left:2px;font-size:13px">:</span></div>
<div class="a" style="left:255px;top:506px;font-size:14px;color:#222;line-height:18px">0.00</div>
<div class="a" style="left:293px;top:513px;width:14px;height:2px;background:#00b3a7"></div>
<div class="a" style="left:317px;top:506px;font-size:13px;color:#222;line-height:18px">现金折扣<span style="margin-left:2px;font-size:13px">:</span></div>
<div class="uline" style="left:382px;top:528px;width:120px;background:#e3e3e3"></div>
<svg style="left:502px;top:508px" width="14" height="14" viewBox="0 0 14 14"><circle cx="7" cy="7" r="6.2" fill="none" stroke="#555" stroke-width="1"/><path d="M5.1 5.4 Q5.1 3.5 7 3.5 Q8.9 3.5 8.9 5.2 Q8.9 6.3 7 7.2 V8.5" fill="none" stroke="#555" stroke-width="1.1"/><circle cx="7" cy="10.3" r="0.75" fill="#555"/></svg>
<div class="a" style="left:526px;top:511px;width:14px;height:2px;background:#333"></div>
<div class="a" style="left:526px;top:516px;width:14px;height:2px;background:#333"></div>
<div class="a" style="left:549px;top:506px;font-size:13px;color:#222;line-height:18px">成交金额<span style="margin-left:2px;font-size:13px">:</span></div>
<div class="a" style="left:615px;top:505px;font-size:14px;color:#222;line-height:18px">0.00</div>
<div class="uline" style="left:615px;top:528px;width:160px;background:#e3e3e3"></div>

<div class="a" style="left:190px;top:555px;width:14px;height:14px;border:1px solid #c4c4c4;border-radius:2px;background:#fff"></div>
<div class="a" style="left:208px;top:554px;font-size:12px;color:#333;line-height:16px">一键付款</div>
<div class="a" style="left:261px;top:554px;font-size:12px;color:#333;line-height:16px">结算方式</div>
<div class="a" style="left:319px;top:554px;font-size:12px;color:#bbb;line-height:16px">选择...</div>
<svg style="left:439px;top:557px" width="13" height="8" viewBox="0 0 13 8"><path d="M1 1 L6.5 6.5 L12 1" fill="none" stroke="#ff7a33" stroke-width="1.4"/></svg>
<div class="uline" style="left:319px;top:577px;width:138px;background:#e3e3e3"></div>
<div class="a" style="left:467px;top:554px;font-size:12px;color:#333;line-height:16px">付款账号</div>
<div class="a" style="left:525px;top:554px;font-size:12px;color:#bbb;line-height:16px">选择...</div>
<svg style="left:644px;top:561px" width="13" height="3" viewBox="0 0 13 3"><circle cx="1.5" cy="1.5" r="1.2" fill="#ff7a33"/><circle cx="6.5" cy="1.5" r="1.2" fill="#ff7a33"/><circle cx="11.5" cy="1.5" r="1.2" fill="#ff7a33"/></svg>
<div class="uline" style="left:525px;top:577px;width:137px;background:#e3e3e3"></div>
<div class="a" style="left:672px;top:554px;width:118px;text-align:right;font-size:12px;color:#bbb;line-height:16px">金额</div>
<div class="uline" style="left:672px;top:577px;width:118px;background:#e3e3e3"></div>
<svg style="left:814px;top:556px" width="13" height="13" viewBox="0 0 13 13"><circle cx="6.5" cy="6.5" r="6" fill="#ff7a33"/><path d="M3.5 6.5 H9.5 M6.5 3.5 V9.5" stroke="#fff" stroke-width="1.5"/></svg>
<div class="a" style="left:831px;top:554px;font-size:12px;color:#ff7a33;line-height:16px">添加</div>

<div class="a" style="left:1079px;top:497px;width:230px;height:85px;background:#f0f0f0"></div>
<div class="a" style="left:1099px;top:519px;font-size:13px;color:#333;line-height:16px;letter-spacing:1.3px">进货金额</div>
<div class="a" style="left:1174px;top:515px;font-size:20px;color:#3a3a3a;line-height:22px;letter-spacing:-0.8px">0.00</div>
<div class="a" style="left:1099px;top:546px;font-size:13px;color:#333;line-height:16px;letter-spacing:1.3px">成交金额</div>
<div class="a" style="left:1174px;top:542px;font-size:20px;color:#3a3a3a;line-height:22px;letter-spacing:-0.8px">0.00</div>

<!-- side floating -->
<div class="a" style="left:1331px;top:242px;width:35px;height:36px;background:#fff;box-shadow:-1px 0 3px rgba(0,0,0,0.06)"></div>
<svg style="left:1339px;top:250px" width="19" height="20" viewBox="0 0 19 20"><path d="M3.5 1 H15.5 Q18 1 18 3.5 V13.5 L12.5 19 H3.5 Q1 19 1 16.5 V3.5 Q1 1 3.5 1Z M12.5 19 V15.5 Q12.5 13.5 14.5 13.5 H18" fill="none" stroke="#555" stroke-width="1.1" stroke-linejoin="round"/><text x="9.3" y="14.2" font-size="11.5" text-anchor="middle" fill="#555">草</text></svg>
<div class="a" style="left:1331px;top:282px;width:35px;height:36px;background:#fff;box-shadow:-1px 0 3px rgba(0,0,0,0.06)"></div>
<svg style="left:1339px;top:290px" width="20" height="20" viewBox="0 0 20 20"><path d="M13.5 6.5 L6 14 Q4.8 15.3 6 16.3 Q7.2 17.2 8.4 16 L16.5 7.8 Q19 5 16.8 2.8 Q14.5 0.8 11.8 3.4 L3.2 12 Q0.2 15.2 2.6 17.6 Q5 19.8 8 16.8" fill="none" stroke="#444" stroke-width="1.15" stroke-linecap="round"/></svg>
<div class="a" style="left:1331px;top:322px;width:35px;height:36px;background:#ff7a33"></div>
<svg style="left:1339px;top:330px" width="20" height="20" viewBox="0 0 20 20"><rect x="1" y="1" width="18" height="18" rx="3" fill="none" stroke="#fff" stroke-width="1.4"/><path d="M11.5 4.5 H15.5 V8.5 M15.5 4.5 L11 9 M8.5 15.5 H4.5 V11.5 M4.5 15.5 L9 11" fill="none" stroke="#fff" stroke-width="1.4"/></svg>

<!-- footer -->
<div class="a" style="left:170px;top:585px;width:1175px;height:51px;background:#fff;box-shadow:0 -2px 4px rgba(0,0,0,0.07)"></div>
<div class="a" style="left:190px;top:604px;font-size:12px;color:#333;line-height:16px">本单上欠(保存时)</div>
<div class="a" style="left:290px;top:603px;font-size:15px;font-weight:bold;color:#111;line-height:18px">0.00</div>
<div class="a" style="left:360px;top:604px;font-size:12px;color:#333;line-height:16px">本单欠款</div>
<svg style="left:410px;top:606px" width="13" height="13" viewBox="0 0 14 14"><circle cx="7" cy="7" r="6.2" fill="none" stroke="#555" stroke-width="1"/><path d="M5.1 5.4 Q5.1 3.5 7 3.5 Q8.9 3.5 8.9 5.2 Q8.9 6.3 7 7.2 V8.5" fill="none" stroke="#555" stroke-width="1.1"/><circle cx="7" cy="10.3" r="0.75" fill="#555"/></svg>
<div class="a" style="left:430px;top:603px;font-size:15px;font-weight:bold;color:#111;line-height:18px">0.00</div>
<div class="a" style="left:481px;top:604px;font-size:12px;color:#333;line-height:16px">此后应付</div>
<svg style="left:530px;top:606px" width="13" height="13" viewBox="0 0 14 14"><circle cx="7" cy="7" r="6.2" fill="none" stroke="#555" stroke-width="1"/><path d="M5.1 5.4 Q5.1 3.5 7 3.5 Q8.9 3.5 8.9 5.2 Q8.9 6.3 7 7.2 V8.5" fill="none" stroke="#555" stroke-width="1.1"/><circle cx="7" cy="10.3" r="0.75" fill="#555"/></svg>
<div class="a" style="left:550px;top:603px;font-size:15px;font-weight:bold;color:#111;line-height:18px">0.00</div>
<svg style="left:660px;top:605px" width="15" height="15" viewBox="0 0 15 15"><circle cx="7.5" cy="7.5" r="6.8" fill="none" stroke="#aaa" stroke-width="1"/><path d="M4.5 6 H10.5 V10.5 H4.5Z M6 6 V4.8 Q6 3.8 7.5 3.8 Q9 3.8 9 4.8 V6" fill="none" stroke="#aaa" stroke-width="1"/></svg>
<div class="a" style="left:678px;top:603px;font-size:12px;color:#333;line-height:16px">商品种类<span style="margin-left:3px">:</span></div>
<div class="a" style="left:742px;top:603px;font-size:15px;color:#ff9a66;line-height:18px">0</div>
<div class="a" style="left:756px;top:604px;font-size:12px;color:#333;line-height:16px">种</div>
<div class="a" style="left:814px;top:604px;width:14px;height:14px;background:#ff7a33;border-radius:2px"></div>
<svg style="left:816px;top:606px" width="10" height="10" viewBox="0 0 10 10"><path d="M1.5 5 L4 7.5 L8.5 2.5" fill="none" stroke="#fff" stroke-width="1.6"/></svg>
<div class="a" style="left:832px;top:603px;font-size:12px;color:#333;line-height:16px">价格追踪本单</div>
<div class="a" style="left:926px;top:594px;width:82px;height:35px;border:1px solid #b0b0b0;border-radius:3px;background:#fff;font-size:16px;color:#333;line-height:33px;text-align:center">放弃</div>
<div class="a" style="left:1020px;top:593px;width:150px;height:36px;border:1px solid #ff7a33;border-radius:3px;background:#fff"></div>
<div class="a" style="left:1055px;top:602px;font-size:16px;color:#ff7a33;line-height:18px">保存草稿</div>
<svg style="left:1125px;top:607px" width="11" height="7" viewBox="0 0 11 7"><path d="M1 6 L5.5 1.5 L10 6" fill="none" stroke="#ff7a33" stroke-width="1.3"/></svg>
<div class="a" style="left:1182px;top:593px;width:142px;height:36px;background:#ff7a33;border-radius:3px"></div>
<div class="a" style="left:1206px;top:601px;font-size:16px;color:#fff;line-height:18px">保存&amp;新增</div>
<svg style="left:1295px;top:610px" width="8" height="5" viewBox="0 0 8 5"><path d="M0.5 0.5 L4 4 L7.5 0.5Z" fill="#fff"/></svg>

<!-- IME -->
<div class="a" style="left:1210px;top:610px;width:156px;height:26px;background:#fff;border:1px solid #b6cdeb;border-right:none;border-bottom:none"></div>
<div class="a" style="left:1341px;top:611px;width:25px;height:25px;background:linear-gradient(90deg,#eef3fb,#fdfbe8)"></div>
<svg style="left:1184px;top:604px" width="40" height="34" viewBox="0 0 40 34"><defs><linearGradient id="sg" x1="0" y1="0" x2="0" y2="1"><stop offset="0" stop-color="#f47038"/><stop offset="1" stop-color="#ec4e12"/></linearGradient></defs><g transform="rotate(-15 20 18)"><rect x="6" y="5" width="27" height="27" rx="4" fill="url(#sg)"/></g><path d="M31 11.5 Q27 8.8 19 9.8 Q10.5 11 11.5 15.5 Q12.5 18.5 19.5 18.8 Q24.5 19 23.8 20.8 Q23 22.8 16 22.8 Q12 22.8 9.5 21.8 L9 26.5 Q13 28.3 19 28 Q29.5 27.3 29.5 21.3 Q29.5 16.3 21.5 15.8 Q16.8 15.6 17.5 14.5 Q18.3 13.4 23 13.8 Q27 14.2 30 15.5Z" fill="#fff"/></svg>
<svg style="left:1226px;top:616px" width="14" height="14" viewBox="0 0 14 14"><path d="M7 0.5 V13.5 M1.2 3.8 H12.8 V9.2 H1.2Z" fill="none" stroke="#1a6fd6" stroke-width="2" stroke-linejoin="round"/></svg>
<div class="a" style="left:1252px;top:612px;font-size:15px;font-weight:bold;color:#1a6fd6;line-height:20px">°,</div>
<svg style="left:1275px;top:614px" width="13" height="18" viewBox="0 0 13 18"><rect x="4" y="0.5" width="5" height="10" rx="2.5" fill="#1a6fd6"/><path d="M1.5 7.5 Q1.5 13 6.5 13 Q11.5 13 11.5 7.5 M6.5 13 V17" fill="none" stroke="#1a6fd6" stroke-width="1.5"/></svg>
<svg style="left:1298px;top:616px" width="16" height="13" viewBox="0 0 16 13"><rect x="0.8" y="0.8" width="14.4" height="11.4" rx="1.5" fill="none" stroke="#1a6fd6" stroke-width="1.5"/><path d="M3.5 4h1.5M6.5 4h1.5M9.5 4h1.5M3.5 6.5h1.5M6.5 6.5h1.5M9.5 6.5h1.5M4 9h8" stroke="#1a6fd6" stroke-width="1.4"/></svg>
<svg style="left:1322px;top:616px" width="16" height="14" viewBox="0 0 16 14"><path d="M5 0.5 Q8 2 11 0.5 L15.5 3 L14 6.5 L12 5.8 V13.5 H4 V5.8 L2 6.5 L0.5 3Z" fill="#1a6fd6"/></svg>
<svg style="left:1345px;top:616px" width="15" height="15" viewBox="0 0 15 15"><rect x="0.5" y="0.5" width="6" height="6" rx="2" fill="#1a6fd6"/><rect x="8.5" y="0.5" width="6" height="6" rx="3" fill="#1a6fd6"/><rect x="0.5" y="8.5" width="6" height="6" rx="2" fill="#1a6fd6"/><rect x="8.5" y="8.5" width="6" height="6" rx="2" fill="#1a6fd6"/></svg>


</body></html>
